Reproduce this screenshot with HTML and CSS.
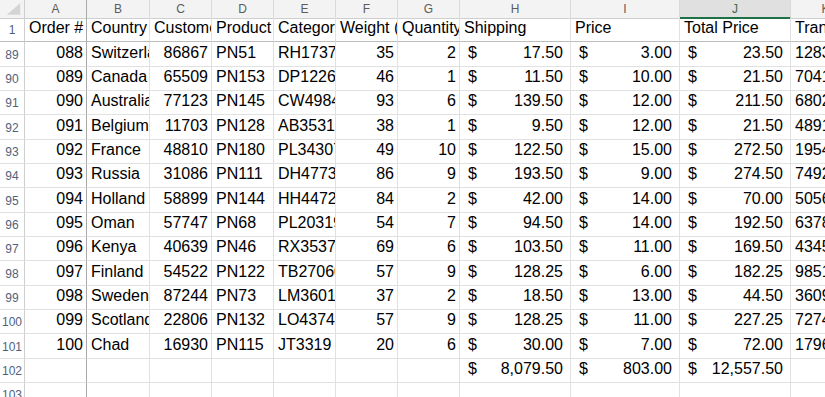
FILE: index.html
```html
<!DOCTYPE html>
<html>
<head>
<meta charset="utf-8">
<link rel="stylesheet" href="styles.css">
</head>
<body>
<div class="sheet">
  <div class="row hdr">
    <div class="corner"><svg width="25" height="18" viewBox="0 0 25 18"><polygon points="21,3 21,15 7,15" fill="#d4d4d4"/></svg></div>
    <div class="ch fz">A</div><div class="ch">B</div><div class="ch">C</div><div class="ch">D</div><div class="ch">E</div><div class="ch">F</div><div class="ch">G</div><div class="ch">H</div><div class="ch">I</div><div class="ch sel">J</div><div class="ch">K</div>
  </div>
  <div class="row top">
    <div class="rh">1</div><div class="c fz">Order #</div><div class="c">Country</div><div class="c">Customer ID</div><div class="c">Product ID</div><div class="c">Category</div><div class="c">Weight (kg)</div><div class="c">Quantity</div><div class="c">Shipping</div><div class="c">Price</div><div class="c">Total Price</div><div class="c">Transaction</div>
  </div>
  <div class="row">
    <div class="rh">89</div><div class="c r fz">088</div><div class="c">Switzerland</div><div class="c r">86867</div><div class="c">PN51</div><div class="c">RH17372</div><div class="c r">35</div><div class="c r">2</div><div class="c acc"><span>$</span><span>17.50</span></div><div class="c acc"><span>$</span><span>3.00</span></div><div class="c acc"><span>$</span><span>23.50</span></div><div class="c">12836</div>
  </div>
  <div class="row">
    <div class="rh">90</div><div class="c r fz">089</div><div class="c">Canada</div><div class="c r">65509</div><div class="c">PN153</div><div class="c">DP12266</div><div class="c r">46</div><div class="c r">1</div><div class="c acc"><span>$</span><span>11.50</span></div><div class="c acc"><span>$</span><span>10.00</span></div><div class="c acc"><span>$</span><span>21.50</span></div><div class="c">70412</div>
  </div>
  <div class="row">
    <div class="rh">91</div><div class="c r fz">090</div><div class="c">Australia</div><div class="c r">77123</div><div class="c">PN145</div><div class="c">CW49841</div><div class="c r">93</div><div class="c r">6</div><div class="c acc"><span>$</span><span>139.50</span></div><div class="c acc"><span>$</span><span>12.00</span></div><div class="c acc"><span>$</span><span>211.50</span></div><div class="c">68021</div>
  </div>
  <div class="row">
    <div class="rh">92</div><div class="c r fz">091</div><div class="c">Belgium</div><div class="c r">11703</div><div class="c">PN128</div><div class="c">AB35318</div><div class="c r">38</div><div class="c r">1</div><div class="c acc"><span>$</span><span>9.50</span></div><div class="c acc"><span>$</span><span>12.00</span></div><div class="c acc"><span>$</span><span>21.50</span></div><div class="c">48915</div>
  </div>
  <div class="row">
    <div class="rh">93</div><div class="c r fz">092</div><div class="c">France</div><div class="c r">48810</div><div class="c">PN180</div><div class="c">PL34307</div><div class="c r">49</div><div class="c r">10</div><div class="c acc"><span>$</span><span>122.50</span></div><div class="c acc"><span>$</span><span>15.00</span></div><div class="c acc"><span>$</span><span>272.50</span></div><div class="c">19544</div>
  </div>
  <div class="row">
    <div class="rh">94</div><div class="c r fz">093</div><div class="c">Russia</div><div class="c r">31086</div><div class="c">PN111</div><div class="c">DH47736</div><div class="c r">86</div><div class="c r">9</div><div class="c acc"><span>$</span><span>193.50</span></div><div class="c acc"><span>$</span><span>9.00</span></div><div class="c acc"><span>$</span><span>274.50</span></div><div class="c">74920</div>
  </div>
  <div class="row">
    <div class="rh">95</div><div class="c r fz">094</div><div class="c">Holland</div><div class="c r">58899</div><div class="c">PN144</div><div class="c">HH44725</div><div class="c r">84</div><div class="c r">2</div><div class="c acc"><span>$</span><span>42.00</span></div><div class="c acc"><span>$</span><span>14.00</span></div><div class="c acc"><span>$</span><span>70.00</span></div><div class="c">50563</div>
  </div>
  <div class="row">
    <div class="rh">96</div><div class="c r fz">095</div><div class="c">Oman</div><div class="c r">57747</div><div class="c">PN68</div><div class="c">PL20319</div><div class="c r">54</div><div class="c r">7</div><div class="c acc"><span>$</span><span>94.50</span></div><div class="c acc"><span>$</span><span>14.00</span></div><div class="c acc"><span>$</span><span>192.50</span></div><div class="c">63781</div>
  </div>
  <div class="row">
    <div class="rh">97</div><div class="c r fz">096</div><div class="c">Kenya</div><div class="c r">40639</div><div class="c">PN46</div><div class="c">RX35374</div><div class="c r">69</div><div class="c r">6</div><div class="c acc"><span>$</span><span>103.50</span></div><div class="c acc"><span>$</span><span>11.00</span></div><div class="c acc"><span>$</span><span>169.50</span></div><div class="c">43452</div>
  </div>
  <div class="row">
    <div class="rh">98</div><div class="c r fz">097</div><div class="c">Finland</div><div class="c r">54522</div><div class="c">PN122</div><div class="c">TB27060</div><div class="c r">57</div><div class="c r">9</div><div class="c acc"><span>$</span><span>128.25</span></div><div class="c acc"><span>$</span><span>6.00</span></div><div class="c acc"><span>$</span><span>182.25</span></div><div class="c">98517</div>
  </div>
  <div class="row">
    <div class="rh">99</div><div class="c r fz">098</div><div class="c">Sweden</div><div class="c r">87244</div><div class="c">PN73</div><div class="c">LM36012</div><div class="c r">37</div><div class="c r">2</div><div class="c acc"><span>$</span><span>18.50</span></div><div class="c acc"><span>$</span><span>13.00</span></div><div class="c acc"><span>$</span><span>44.50</span></div><div class="c">36098</div>
  </div>
  <div class="row">
    <div class="rh">100</div><div class="c r fz">099</div><div class="c">Scotland</div><div class="c r">22806</div><div class="c">PN132</div><div class="c">LO43741</div><div class="c r">57</div><div class="c r">9</div><div class="c acc"><span>$</span><span>128.25</span></div><div class="c acc"><span>$</span><span>11.00</span></div><div class="c acc"><span>$</span><span>227.25</span></div><div class="c">72744</div>
  </div>
  <div class="row">
    <div class="rh">101</div><div class="c r fz">100</div><div class="c">Chad</div><div class="c r">16930</div><div class="c">PN115</div><div class="c">JT3319</div><div class="c r">20</div><div class="c r">6</div><div class="c acc"><span>$</span><span>30.00</span></div><div class="c acc"><span>$</span><span>7.00</span></div><div class="c acc"><span>$</span><span>72.00</span></div><div class="c">17963</div>
  </div>
  <div class="row">
    <div class="rh">102</div><div class="c fz"></div><div class="c"></div><div class="c"></div><div class="c"></div><div class="c"></div><div class="c"></div><div class="c"></div><div class="c acc"><span>$</span><span>8,079.50</span></div><div class="c acc"><span>$</span><span>803.00</span></div><div class="c acc"><span>$</span><span>12,557.50</span></div><div class="c"></div>
  </div>
  <div class="row">
    <div class="rh">103</div><div class="c fz"></div><div class="c"></div><div class="c"></div><div class="c"></div><div class="c"></div><div class="c"></div><div class="c"></div><div class="c"></div><div class="c"></div><div class="c"></div><div class="c"></div>
  </div>
</div>
</body>
</html>
```

FILE: styles.css
```css
html, body {
  margin: 0;
  padding: 0;
  background: #ffffff;
  overflow: hidden;
}

.sheet {
  width: 870px;
  font-family: "Liberation Sans", Arial, sans-serif;
  color: #000;
}

.row {
  display: grid;
  grid-template-columns: 25px 62px 63px 62px 62px 62px 62px 62px 111px 109px 111px 70px;
  height: 24.33px;
}

.row.hdr {
  height: 18px;
  background: #f3f3f3;
}

.corner {
  border-right: 1px solid #cfcfcf;
  border-bottom: 1px solid #cfcfcf;
  box-sizing: border-box;
  display: flex;
}

.ch {
  box-sizing: border-box;
  border-right: 1px solid #dadada;
  border-bottom: 1px solid #cfcfcf;
  font-size: 12px;
  color: #5c5c5c;
  display: flex;
  align-items: center;
  justify-content: center;
  line-height: 14px;
}

.ch.fz {
  border-right: 1px solid #a9a9a9;
}

.ch.sel {
  background: #e0e0e0;
  color: #3d6b4f;
  border-bottom: 2px solid #1e7145;
}

.rh {
  box-sizing: border-box;
  border-right: 1px solid #cfcfcf;
  border-bottom: 1px solid #e1e1e1;
  font-size: 12px;
  color: #52617a;
  display: flex;
  align-items: flex-end;
  justify-content: center;
  padding-bottom: 4px;
  line-height: 14px;
}

.c {
  box-sizing: border-box;
  border-right: 1px solid #e1e1e1;
  border-bottom: 1px solid #e1e1e1;
  font-size: 16px;
  line-height: 18px;
  white-space: nowrap;
  overflow: hidden;
  display: flex;
  align-items: flex-end;
  padding: 0 3px 4px 4px;
}

.c.r {
  justify-content: flex-end;
}

.c.fz {
  border-right: 1px solid #a9a9a9;
}

.c.acc {
  justify-content: space-between;
  padding-left: 8px;
  padding-right: 7px;
}

.row.top .c,
.row.top .rh {
  border-bottom: 1px solid #bdbdbd;
}
```
